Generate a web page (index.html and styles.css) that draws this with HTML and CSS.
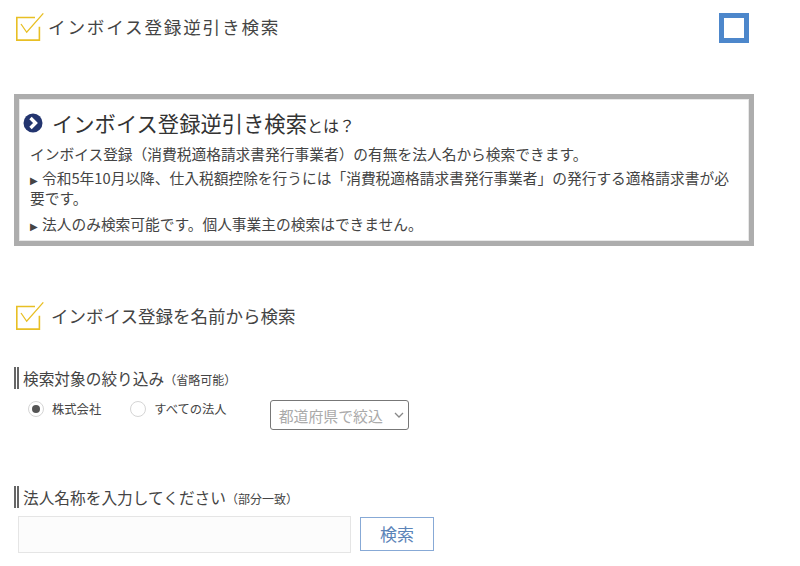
FILE: index.html
```html
<!DOCTYPE html>
<html lang="ja">
<head>
<meta charset="utf-8">
<title>インボイス登録逆引き検索</title>
<link rel="stylesheet" href="styles.css">
</head>
<body>
<main class="page">
  <header class="top">
    <div class="heading">
      <svg class="check" width="28" height="28" viewBox="0 0 28 28"><path d="M19 4.500H.8v22.600h22.600V13.700" fill="none" stroke="#e8bf24" stroke-width="1.600"/><path d="M5 11l5.700 8.300L27.300.4" fill="none" stroke="#e8bf24" stroke-width="1.300"/></svg>
      <h1 class="title">インボイス登録逆引き検索</h1>
    </div>
    <div class="menu-box"></div>
  </header>

  <section class="about">
    <h2 class="about-title"><svg class="bullet" width="20" height="20" viewBox="0 0 20 20"><circle cx="10" cy="10" r="9.500" fill="#23356f"/><path d="M7.500 5L12.500 10l-5 5" fill="none" stroke="#fff" stroke-width="3.400"/></svg><span class="about-big">インボイス登録逆引き検索</span><span class="about-small">とは？</span></h2>
    <p class="lead">インボイス登録（消費税適格請求書発行事業者）の有無を法人名から検索できます。</p>
    <p class="note"><span class="tri">▶</span>令和5年10月以降、仕入税額控除を行うには「消費税適格請求書発行事業者」の発行する適格請求書が必要です。</p>
    <p class="note"><span class="tri">▶</span>法人のみ検索可能です。個人事業主の検索はできません。</p>
  </section>

  <div class="heading heading-second">
    <svg class="check" width="28" height="28" viewBox="0 0 28 28"><path d="M19 4.500H.8v22.600h22.600V13.700" fill="none" stroke="#e8bf24" stroke-width="1.600"/><path d="M5 11l5.700 8.300L27.300.4" fill="none" stroke="#e8bf24" stroke-width="1.300"/></svg>
    <h2 class="subtitle">インボイス登録を名前から検索</h2>
  </div>

  <h3 class="label label-first">検索対象の絞り込み<small>（省略可能）</small></h3>
  <div class="filters">
    <label class="radio"><span class="dot on"></span>株式会社</label>
    <label class="radio radio-all"><span class="dot"></span>すべての法人</label>
    <div class="select"><span>都道府県で絞込</span><svg width="10" height="6" viewBox="0 0 10 6"><path d="M1 1l4 4 4-4" fill="none" stroke="#888" stroke-width="1.300"/></svg></div>
  </div>

  <h3 class="label label-second">法人名称を入力してください<small>（部分一致）</small></h3>
  <div class="search">
    <div class="input"></div>
    <div class="button">検索</div>
  </div>
</main>
</body>
</html>
```
FILE: styles.css
```css
* { box-sizing: border-box; }
html, body { margin: 0; padding: 0; background: #fff; }
body {
  font-family: "Noto Sans CJK JP", "Noto Sans", sans-serif;
  color: #444;
  height: 566px;
  overflow: hidden;
}
.page { width: 800px; padding: 13px 0 0 14px; }
h1, h2, h3, p { margin: 0; font-weight: 400; }

.top { display: flex; justify-content: space-between; align-items: flex-start; width: 735px; height: 81px; }
.heading { display: flex; align-items: center; padding-left: 2px; }
.check { flex: none; }
.title { font-size: 17.600px; line-height: 28px; letter-spacing: 1.800px; margin-left: 4px; color: #444; }
.menu-box { width: 30px; height: 30px; border: 5px solid #4d87cb; }

.about {
  width: 740px; height: 152px;
  border: 5px solid #adadad;
  outline: 1px solid #e8e8e8; outline-offset: -6px;
  padding: 9px 17px 0 11px;
}
.about-title { display: flex; align-items: baseline; height: 30px; color: #333; margin-left: -7px; }
.bullet { flex: none; align-self: center; margin: 0 9px 0 0; }
.about-big { font-size: 21.300px; line-height: 30px; }
.about-small { font-size: 16px; line-height: 30px; }
.lead { font-size: 14.720px; line-height: 22px; margin-top: 5px; color: #444; }
.note { font-size: 14.720px; line-height: 20px; margin-top: 3px; color: #444; }
.note + .note { margin-top: 6px; }
.tri { font-size: 10px; line-height: 1; display: inline-block; width: 12px; color: #444; font-family: "DejaVu Sans", sans-serif; }

.heading-second { margin-top: 56px; }
.subtitle { font-size: 17.500px; line-height: 28px; margin-left: 7px; color: #444; }

.label { font-size: 15.700px; line-height: 24px; border-left: 5px double #666; padding-left: 4px; height: 22px; color: #444; }
.label small { font-size: 12px; }
.label-first { margin-top: 37px; }
.filters { display: flex; align-items: flex-start; height: 97px; padding: 11px 0 0 14px; }
.radio { display: flex; align-items: center; font-size: 12.300px; line-height: 16px; margin-top: 1px; color: #444; }
.dot { width: 16px; height: 16px; border-radius: 50%; border: 1px solid #d5d5d5; margin-right: 8px; position: relative; background: #fff; }
.dot.on::after { content: ""; position: absolute; left: 3px; top: 3px; width: 8px; height: 8px; border-radius: 50%; background: #555; }
.radio-all { margin-left: 29px; }
.select { display: flex; align-items: center; justify-content: space-between; width: 139px; height: 30px; margin-left: 43px; border: 1px solid #777; border-radius: 3px; padding: 0 4px 0 8px; font-size: 14.900px; color: #aaa; }
.search { display: flex; align-items: flex-start; margin: 8px 0 0 4px; }
.input { width: 333px; height: 37px; border: 1px solid #e5e5e5; background: #fcfcfc; }
.button { width: 74px; height: 34px; margin: 1px 0 0 9px; border: 1px solid #87a9d6; color: #5b84b8; font-size: 17px; line-height: 32px; text-align: center; }
```
